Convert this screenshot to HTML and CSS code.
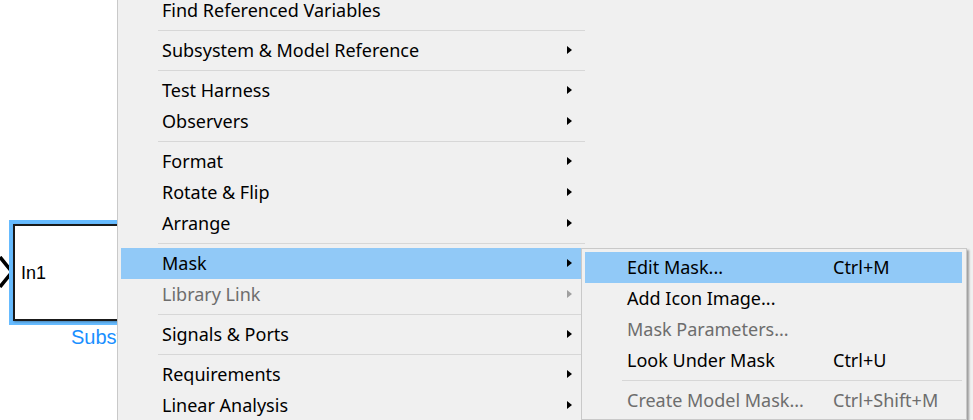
FILE: index.html
```html
<!DOCTYPE html>
<html>
<head>
<meta charset="utf-8">
<link rel="stylesheet" href="styles.css">
</head>
<body>
<div class="canvas">
  <svg class="port" width="15" height="34" viewBox="0 0 15 34"><polyline points="0,1 12,16 0,31" fill="none" stroke="#000" stroke-width="3.6"/></svg>
  <div class="block">
    <div class="block-inner"><span class="block-label">In1</span></div>
  </div>
  <div class="block-name">Subsystem</div>
</div>
<div class="menu">
  <div class="menu-list">
    <div class="item">Find Referenced Variables</div>
    <div class="sep"></div>
    <div class="item">Subsystem &amp; Model Reference<span class="arrow"></span></div>
    <div class="sep"></div>
    <div class="item">Test Harness<span class="arrow"></span></div>
    <div class="item">Observers<span class="arrow"></span></div>
    <div class="sep"></div>
    <div class="item">Format<span class="arrow"></span></div>
    <div class="item">Rotate &amp; Flip<span class="arrow"></span></div>
    <div class="item">Arrange<span class="arrow"></span></div>
    <div class="sep"></div>
    <div class="item active">Mask<span class="arrow"></span></div>
    <div class="item disabled">Library Link<span class="arrow"></span></div>
    <div class="sep"></div>
    <div class="item">Signals &amp; Ports<span class="arrow"></span></div>
    <div class="sep"></div>
    <div class="item">Requirements<span class="arrow"></span></div>
    <div class="item">Linear Analysis<span class="arrow"></span></div>
  </div>
  <div class="submenu">
    <div class="sub-item active"><span class="label">Edit Mask...</span><span class="key">Ctrl+M</span></div>
    <div class="sub-item"><span class="label">Add Icon Image...</span></div>
    <div class="sub-item disabled"><span class="label">Mask Parameters...</span></div>
    <div class="sub-item"><span class="label">Look Under Mask</span><span class="key">Ctrl+U</span></div>
    <div class="sub-sep"></div>
    <div class="sub-item disabled"><span class="label">Create Model Mask...</span><span class="key">Ctrl+Shift+M</span></div>
  </div>
</div>
</body>
</html>
```
FILE: styles.css
```css
html, body {
  margin: 0;
  padding: 0;
}
body {
  width: 973px;
  height: 420px;
  overflow: hidden;
  display: flex;
  background: #ffffff;
  font-family: "Noto Sans", "Open Sans", sans-serif;
}
.canvas {
  position: relative;
  width: 117px;
  height: 420px;
  flex: none;
  overflow: hidden;
  background: #ffffff;
}
.port {
  position: absolute;
  left: 0;
  top: 256px;
}
.block {
  position: absolute;
  left: 9px;
  top: 220px;
  width: 140px;
  height: 105px;
  background: #66bbff;
  padding: 4px;
  box-sizing: border-box;
}
.block-inner {
  width: 100%;
  height: 100%;
  background: #ffffff;
  border: 2px solid #1a1a1a;
  box-sizing: border-box;
  display: flex;
  align-items: center;
  box-shadow: 1px 1px 2px rgba(0,0,0,0.3);
}
.block-label {
  font-family: "Liberation Sans", Arial, sans-serif;
  font-size: 18px;
  color: #000;
  margin-left: 6px;
  margin-top: 1px;
}
.block-name {
  position: absolute;
  left: 71px;
  top: 326px;
  font-family: "Liberation Sans", Arial, sans-serif;
  font-size: 20px;
  color: #1a8fff;
  white-space: nowrap;
}
.menu {
  position: relative;
  flex: 1;
  height: 420px;
  background: #f0f0f0;
  border-left: 1px solid #c9c9c9;
}
.menu-list {
  margin-top: -5px;
  padding-left: 3px;
}
.item {
  position: relative;
  width: 460px;
  height: 31px;
  line-height: 31px;
  padding-left: 41px;
  box-sizing: border-box;
  font-size: 18px;
  color: #000;
  white-space: nowrap;
}
.item.active {
  background: #91c9f7;
}
.item.disabled {
  color: #6d6d6d;
}
.arrow {
  position: absolute;
  right: 9px;
  top: 11px;
  width: 0;
  height: 0;
  border-left: 5px solid #000;
  border-top: 4.5px solid transparent;
  border-bottom: 4.5px solid transparent;
}
.item.disabled .arrow {
  border-left-color: #a0a0a0;
}
.sep {
  width: 427px;
  height: 9px;
  margin-left: 37px;
  box-sizing: border-box;
  padding-top: 4px;
}
.sep::before {
  content: "";
  display: block;
  height: 1px;
  background: #d7d7d7;
}
.submenu {
  position: absolute;
  left: 463px;
  top: 248px;
  width: 386px;
  box-sizing: border-box;
  padding: 3px 4px 3px 3px;
  background: #f0f0f0;
  border: 1px solid #c9c9c9;
  box-shadow: 2px 2px 2px rgba(0,0,0,0.35);
}
.sub-item {
  display: flex;
  height: 31px;
  line-height: 31px;
  padding-left: 42px;
  font-size: 18px;
  color: #000;
  white-space: nowrap;
}
.sub-item.active {
  background: #91c9f7;
}
.sub-item.disabled {
  color: #6d6d6d;
}
.sub-item .label {
  width: 206px;
}
.sub-sep {
  height: 9px;
  margin-left: 37px;
  box-sizing: border-box;
  padding-top: 4px;
}
.sub-sep::before {
  content: "";
  display: block;
  height: 1px;
  background: #d7d7d7;
}
```
